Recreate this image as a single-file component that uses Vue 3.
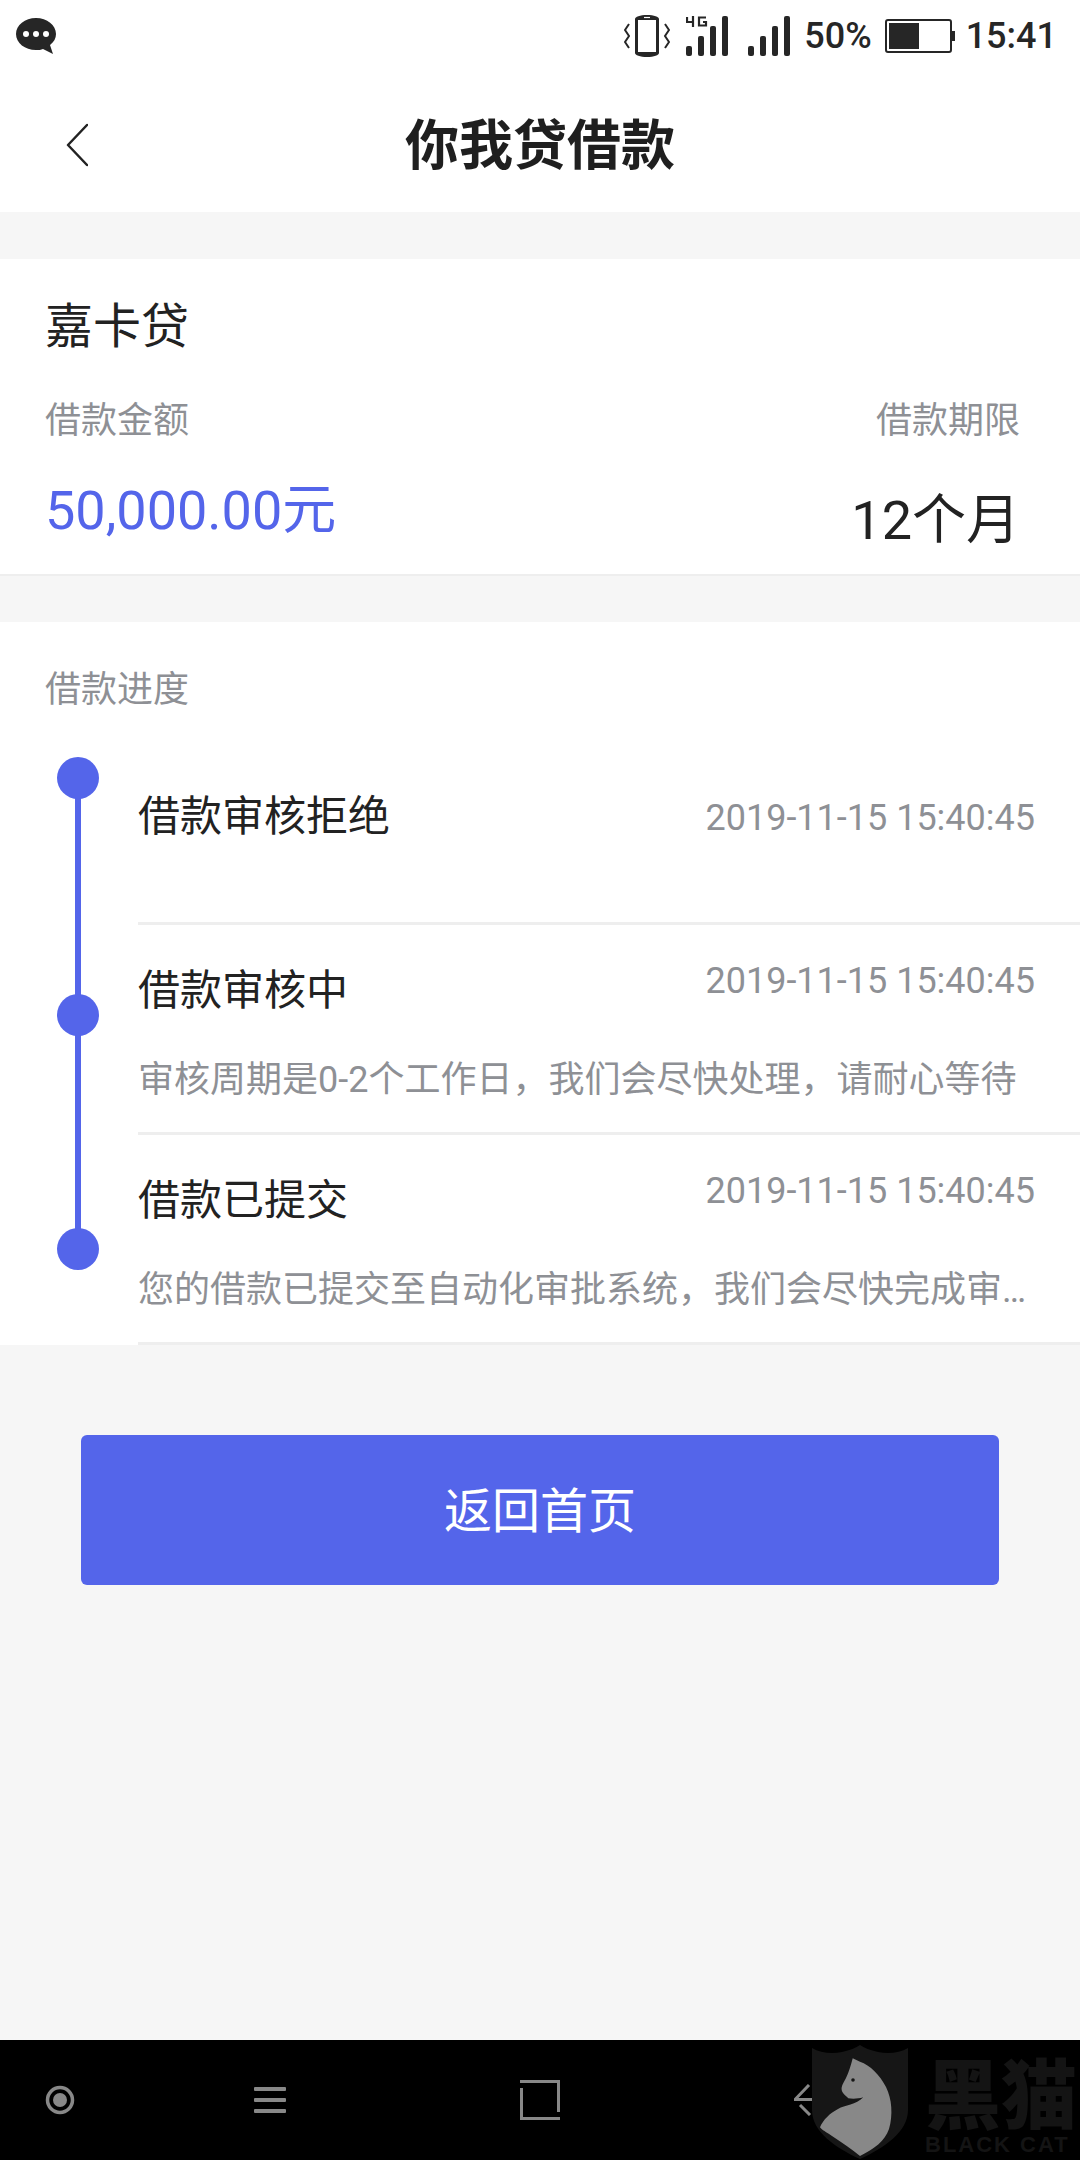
<template>
  <div class="page">
    <div class="status-bar">
      <svg class="chat-icon" viewBox="0 0 40 40">
        <path d="M20 2C9 2 0 9 0 18s9 16 20 16c3 0 5 0 7-1l10 5-3-9c4-3 6-7 6-11C40 9 31 2 20 2z" fill="#262626" />
        <circle cx="10" cy="18" r="3" fill="#fff" />
        <circle cx="20" cy="18" r="3" fill="#fff" />
        <circle cx="30" cy="18" r="3" fill="#fff" />
      </svg>
      <div class="status-right">
        <svg class="vibrate" viewBox="0 0 46 44">
          <path d="M11 5c0-2 5-4 12-4s12 2 12 4v34c0 2-5 4-12 4s-12-2-12-4z" fill="#262626" />
          <rect x="14" y="6" width="18" height="32" fill="#fff" />
          <path d="M20 3.500h6" stroke="#fff" stroke-width="1.200" />
          <path d="M5 10L1 16l4 6-4 6 4 6M41 10l4 6-4 6 4 6-4 6" fill="none" stroke="#262626" stroke-width="2" />
        </svg>
        <svg class="signal" viewBox="0 0 42 40" fill="#262626">
          <rect x="0" y="30" width="6" height="10" rx="2" />
          <rect x="12" y="20" width="6" height="20" rx="2" />
          <rect x="24" y="10" width="6" height="30" rx="2" />
          <rect x="36" y="0" width="6" height="40" rx="2" />
          <path d="M1 1v5h6M7 0v11M20 1.500h-7v8h7V6h-3" fill="none" stroke="#262626" stroke-width="2.200" />
        </svg>
        <svg class="signal" viewBox="0 0 42 40" fill="#262626">
          <rect x="0" y="30" width="6" height="10" rx="2" />
          <rect x="12" y="20" width="6" height="20" rx="2" />
          <rect x="24" y="10" width="6" height="30" rx="2" />
          <rect x="36" y="0" width="6" height="40" rx="2" />
        </svg>
        <span class="status-text percent">50%</span>
        <svg class="battery" viewBox="0 0 70 34">
          <rect x="1" y="1" width="65" height="32" rx="2" fill="none" stroke="#262626" stroke-width="2" />
          <rect x="4" y="4" width="30" height="26" fill="#262626" />
          <rect x="66" y="12" width="4" height="10" fill="#262626" />
        </svg>
        <span class="status-text">15:41</span>
      </div>
    </div>

    <header class="header">
      <svg class="back" viewBox="0 0 22 44" fill="none" stroke="#222" stroke-width="2.500" stroke-linecap="round" stroke-linejoin="round">
        <path d="M21 2L2 22l19 20" />
      </svg>
      <h1 class="title">你我贷借款</h1>
    </header>

    <section class="loan-card">
      <div class="product">嘉卡贷</div>
      <div class="loan-row labels">
        <span>借款金额</span>
        <span>借款期限</span>
      </div>
      <div class="loan-row values">
        <span class="amount">50,000.00元</span>
        <span class="term">12个月</span>
      </div>
    </section>

    <section class="progress-card">
      <div class="progress-label">借款进度</div>
      <div class="timeline">
        <div class="rail">
          <span v-for="step in steps" :key="step.title" class="dot"></span>
        </div>
        <div v-for="(step, i) in steps" :key="step.title" :class="['step', { latest: i === 0 }]">
          <div class="step-head">
            <span class="step-title">{{ step.title }}</span>
            <span class="step-date">{{ step.date }}</span>
          </div>
          <div class="step-desc">{{ step.desc }}</div>
        </div>
      </div>
    </section>

    <button class="home-btn">返回首页</button>

    <nav class="nav-bar">
      <svg class="nav-ring" viewBox="0 0 30 30">
        <circle cx="15" cy="15" r="12.500" fill="none" stroke="#888" stroke-width="3.500" />
        <circle cx="15" cy="15" r="7" fill="#888" />
      </svg>
      <svg class="nav-menu" viewBox="0 0 32 26" fill="#888">
        <rect y="0" width="32" height="4" rx="1" />
        <rect y="11" width="32" height="4" rx="1" />
        <rect y="22" width="32" height="4" rx="1" />
      </svg>
      <svg class="nav-square" viewBox="0 0 40 40" fill="none" stroke="#888" stroke-width="3">
        <path d="M1.500 8v30.500H40M0 1.500h38.500V32" />
      </svg>
      <svg class="nav-back" viewBox="0 0 32 32" fill="none" stroke="#888" stroke-width="3">
        <path d="M15 1L1 15.500h31M6 21l10 10" />
      </svg>
      <div class="watermark">
        <svg class="shield" viewBox="0 0 96 114">
          <path d="M0 3c8 5 20 6 30 4 8-2 14-4 18-7 4 3 10 5 18 7 10 2 22 1 30-4v62c0 22-24 38-48 49C24 103 0 87 0 65z" fill="#161616" />
          <path d="M40.700 13.300L48 16.700C58 20 68 30 74 42 80 54 81 70 77 84 73 96 62 104 48 111 40 104 30 98 20 91 14 87 10 85 8 82.300 11 75 18 68 26 64 33 60 44 60 51.300 52.300 46 54 40 54 36.300 53.300 33 50 30 48 29.700 45 29 41 32 37 34 33 37 27 39 20 40.700 13.300z" fill="#888" />
          <circle cx="41" cy="35" r="1.800" fill="#161616" />
        </svg>
        <div class="wm-text">
          <div class="wm-cn">黑猫</div>
          <div class="wm-en">BLACK CAT</div>
        </div>
      </div>
    </nav>
  </div>
</template>

<script setup>
const steps = [
  { title: '借款审核拒绝', date: '2019-11-15 15:40:45', desc: '' },
  { title: '借款审核中', date: '2019-11-15 15:40:45', desc: '审核周期是0-2个工作日，我们会尽快处理，请耐心等待' },
  { title: '借款已提交', date: '2019-11-15 15:40:45', desc: '您的借款已提交至自动化审批系统，我们会尽快完成审核，请耐心等待' }
]
</script>

<style>
html,
body {
  margin: 0;
  background: #f6f6f6;
}
</style>

<style scoped>
.page {
  width: 1080px;
  height: 2160px;
  display: flex;
  flex-direction: column;
  background: #f6f6f6;
  font-family: Roboto, "Noto Sans CJK SC", sans-serif;
  color: #222;
  overflow: hidden;
}

.status-bar {
  height: 72px;
  padding: 0 23px 0 16px;
  display: flex;
  justify-content: space-between;
  align-items: center;
  background: #fff;
}

.chat-icon {
  width: 40px;
  height: 40px;
}

.status-right {
  display: flex;
  align-items: center;
}

.vibrate {
  width: 46px;
  height: 44px;
  margin-right: 16px;
}

.signal {
  width: 42px;
  height: 40px;
  margin-right: 20px;
}

.status-text {
  font-size: 36px;
  font-weight: 500;
  color: #262626;
}

.percent {
  margin-left: -6px;
  margin-right: 13px;
}

.battery {
  width: 70px;
  height: 34px;
  margin-right: 11px;
}

.header {
  height: 140px;
  box-sizing: border-box;
  padding-bottom: 2px;
  display: flex;
  align-items: center;
  justify-content: center;
  position: relative;
  background: #fff;
}

.back {
  position: absolute;
  left: 66px;
  top: 51px;
  width: 22px;
  height: 44px;
}

.title {
  margin: 0;
  font-size: 54px;
  font-weight: 700;
  color: #1f1f1f;
}

.loan-card {
  margin-top: 47px;
  height: 317px;
  box-sizing: border-box;
  padding: 38px 60px 0 45px;
  background: #fff;
  border-bottom: 2px solid #eee;
}

.product {
  font-size: 48px;
  line-height: 60px;
}

.loan-row {
  display: flex;
  justify-content: space-between;
}

.labels {
  margin-top: 39px;
  font-size: 36px;
  line-height: 50px;
  color: #8e9095;
}

.values {
  margin-top: 30px;
  height: 70px;
}

.amount {
  font-size: 54px;
  line-height: 70px;
  color: #5465ea;
}

.term {
  font-size: 54px;
  line-height: 89px;
  color: #222;
}

.progress-card {
  margin-top: 46px;
  background: #fff;
}

.progress-label {
  padding: 43px 45px 0;
  font-size: 36px;
  line-height: 50px;
  color: #8e9095;
}

.timeline {
  position: relative;
}

.rail {
  position: absolute;
  left: 57px;
  top: 42px;
  height: 513px;
  width: 42px;
  display: flex;
  flex-direction: column;
  justify-content: space-between;
  align-items: center;
}

.rail::before {
  content: "";
  position: absolute;
  left: 18px;
  top: 10px;
  bottom: 10px;
  width: 6px;
  background: #5465ea;
}

.dot {
  position: relative;
  width: 42px;
  height: 42px;
  border-radius: 50%;
  background: #5465ea;
}

.dot:nth-child(2) {
  margin-top: 2px;
}

.step {
  margin-left: 138px;
  height: 210px;
  box-sizing: border-box;
  padding: 36px 45px 0 0;
  border-bottom: 3px solid #eee;
}

.step.latest {
  padding-top: 72px;
}

.step-head {
  display: flex;
  justify-content: space-between;
  align-items: flex-start;
}

.step-title {
  font-size: 42px;
  line-height: 60px;
}

.step-date {
  font-size: 36px;
  line-height: 41px;
  color: #8e9095;
}

.latest .step-date {
  line-height: 63px;
}

.step-desc {
  margin-top: 34px;
  font-size: 36px;
  line-height: 50px;
  color: #8e9095;
  white-space: nowrap;
  overflow: hidden;
  text-overflow: ellipsis;
}

.home-btn {
  margin: 90px 81px 0;
  height: 150px;
  padding: 0 0 7px;
  border: none;
  border-radius: 6px;
  background: #5465ea;
  color: #fff;
  font-family: inherit;
  font-size: 48px;
}

.nav-bar {
  margin-top: auto;
  height: 120px;
  position: relative;
  display: grid;
  grid-template-columns: 120px 300px 240px 300px;
  justify-items: center;
  align-items: center;
  background: #000;
}

.nav-ring {
  width: 30px;
  height: 30px;
}

.nav-menu {
  width: 32px;
  height: 26px;
}

.nav-square {
  width: 40px;
  height: 40px;
}

.nav-back {
  width: 32px;
  height: 32px;
}

.watermark {
  position: absolute;
  left: 812px;
  top: 5px;
  display: flex;
  color: #141414;
}

.shield {
  width: 96px;
  height: 114px;
  flex: none;
}

.wm-text {
  margin-left: 17px;
  width: 152px;
}

.wm-cn {
  font-family: "Noto Sans CJK SC", sans-serif;
  font-size: 76px;
  font-weight: 900;
  line-height: 70px;
  margin-top: 10px;
  white-space: nowrap;
}

.wm-en {
  font-family: "Liberation Sans", sans-serif;
  font-size: 22px;
  font-weight: 700;
  letter-spacing: 2px;
  line-height: 20px;
  margin-top: 10px;
  white-space: nowrap;
}
</style>
